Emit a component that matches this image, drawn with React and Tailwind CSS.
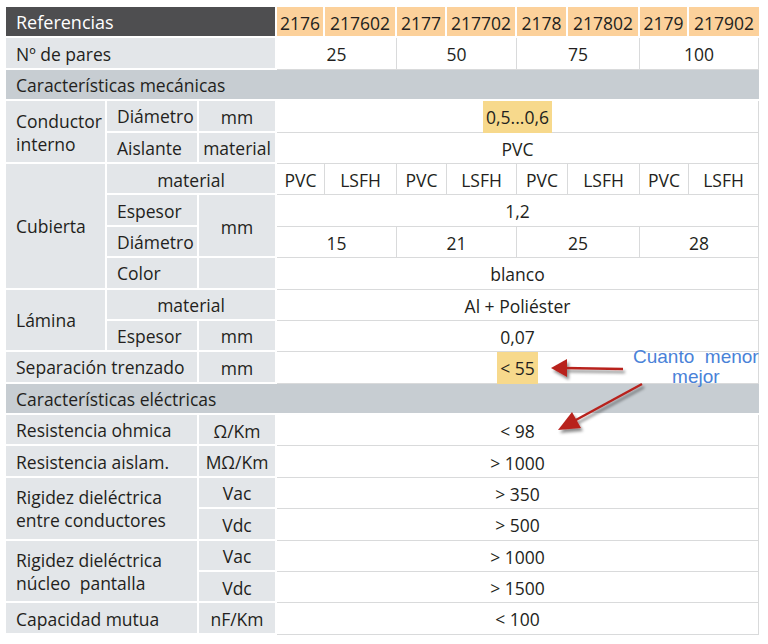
import React from 'react';

const font = { fontFamily: '"Open Sans", "Liberation Sans", sans-serif' };

// label cell (gray, left side)
function L({ children, className = '' }) {
    return (
        <div className={`flex items-center bg-[#e3e6e9] border-r-2 border-b-2 border-white px-[10px] pt-[2px] leading-[23px] ${className}`}>
            {children}
        </div>
    );
}

// unit cell (gray, centered)
function U({ children, className = '' }) {
    return (
        <div className={`flex items-center justify-center bg-[#e3e6e9] border-r-2 border-b-2 border-white pt-[2px] ${className}`}>
            {children}
        </div>
    );
}

// value cell (white, light lines)
function V({ children, className = '' }) {
    return (
        <div className={`flex items-center justify-center bg-white border-r border-b border-[#d9dadb] pt-[2px] ${className}`}>
            {children}
        </div>
    );
}

function Section({ children }) {
    return (
        <div className="col-span-11 flex items-center bg-[#c7cdd2] border-b-2 border-white px-[10px] pt-[2px]">
            {children}
        </div>
    );
}

function Hl({ children }) {
    return <span className="bg-[#f7d98c] px-[3px] py-[3px]">{children}</span>;
}

function Arrows() {
    return (
        <svg className="absolute left-0 top-0 pointer-events-none" width="768" height="644">
            <defs>
                <filter id="sh" x="-20%" y="-20%" width="140%" height="160%">
                    <feDropShadow dx="2" dy="3" stdDeviation="1.6" floodColor="#000" floodOpacity="0.45" />
                </filter>
            </defs>
            <g filter="url(#sh)" fill="#b8231f" stroke="#b8231f">
                <line x1="623" y1="369" x2="564" y2="368" strokeWidth="2.5" />
                <polygon points="551,368 567,359 567,377" stroke="none" />
                <line x1="642" y1="384" x2="574" y2="421" strokeWidth="2.5" />
                <polygon points="558,430 572,412 581,428" stroke="none" />
            </g>
        </svg>
    );
}

export default function App() {
    const refs = ['2176', '217602', '2177', '217702', '2178', '217802', '2179', '217902'];
    const mats = ['PVC', 'LSFH', 'PVC', 'LSFH', 'PVC', 'LSFH', 'PVC', 'LSFH'];

    return (
        <div className="relative w-[768px] h-[644px] bg-white text-[#231f20] text-[17.5px]" style={font}>
            <div className="pl-[6px] pt-[7px]">
                <div className="grid w-[753px] grid-cols-[101px_92px_78px_48px_72px_50px_70px_51px_72px_49px_70px] auto-rows-[31.4px]">
                    {/* header */}
                    <div className="col-span-3 flex items-center bg-[#4e4e50] border-r-2 border-b-2 border-white px-[10px] pt-[2px] text-white text-[18px]">
                        Referencias
                    </div>
                    {refs.map((r, i) => (
                        <div key={r} className={`flex items-center justify-center bg-[#fcd19b] border-b-2 border-white pt-[2px] ${i < 7 ? 'border-r-2' : ''}`}>
                            {r}
                        </div>
                    ))}

                    {/* pares */}
                    <L className="col-span-3">Nº de pares</L>
                    <V className="col-span-2">25</V>
                    <V className="col-span-2">50</V>
                    <V className="col-span-2">75</V>
                    <V className="col-span-2">100</V>

                    <Section>Características mecánicas</Section>

                    {/* conductor interno */}
                    <L className="row-span-2">Conductor<br />interno</L>
                    <L>Diámetro</L>
                    <U>mm</U>
                    <V className="col-span-8"><Hl>0,5...0,6</Hl></V>
                    <L>Aislante</L>
                    <U>material</U>
                    <V className="col-span-8">PVC</V>

                    {/* cubierta */}
                    <L className="row-span-4">Cubierta</L>
                    <U className="col-span-2">material</U>
                    {mats.map((m, i) => (
                        <V key={i}>{m}</V>
                    ))}
                    <L>Espesor</L>
                    <U className="row-span-2">mm</U>
                    <V className="col-span-8">1,2</V>
                    <L>Diámetro</L>
                    <V className="col-span-2">15</V>
                    <V className="col-span-2">21</V>
                    <V className="col-span-2">25</V>
                    <V className="col-span-2">28</V>
                    <L>Color</L>
                    <U></U>
                    <V className="col-span-8">blanco</V>

                    {/* lamina */}
                    <L className="row-span-2">Lámina</L>
                    <U className="col-span-2">material</U>
                    <V className="col-span-8">Al + Poliéster</V>
                    <L>Espesor</L>
                    <U>mm</U>
                    <V className="col-span-8">0,07</V>

                    <L className="col-span-2">Separación trenzado</L>
                    <U>mm</U>
                    <V className="col-span-8"><Hl>&lt; 55</Hl></V>

                    <Section>Características eléctricas</Section>

                    <L className="col-span-2">Resistencia ohmica</L>
                    <U>Ω/Km</U>
                    <V className="col-span-8">&lt; 98</V>

                    <L className="col-span-2">Resistencia aislam.</L>
                    <U>MΩ/Km</U>
                    <V className="col-span-8">&gt; 1000</V>

                    <L className="col-span-2 row-span-2">Rigidez dieléctrica<br />entre conductores</L>
                    <U>Vac</U>
                    <V className="col-span-8">&gt; 350</V>
                    <U>Vdc</U>
                    <V className="col-span-8">&gt; 500</V>

                    <L className="col-span-2 row-span-2">
                        <span className="whitespace-pre">{'Rigidez dieléctrica\nnúcleo  pantalla'}</span>
                    </L>
                    <U>Vac</U>
                    <V className="col-span-8">&gt; 1000</V>
                    <U>Vdc</U>
                    <V className="col-span-8">&gt; 1500</V>

                    <L className="col-span-2">Capacidad mutua</L>
                    <U>nF/Km</U>
                    <V className="col-span-8">&lt; 100</V>
                </div>
            </div>

            <Arrows />

            {/* annotation */}
            <div className="absolute left-[633px] top-[347px] text-[19px] leading-[20px] text-[#4a82d8] text-center" style={{ fontFamily: '"Liberation Sans", Arial, sans-serif' }}>
                <div className="whitespace-pre">Cuanto  menor</div>
                <div>mejor</div>
            </div>
        </div>
    );
}
